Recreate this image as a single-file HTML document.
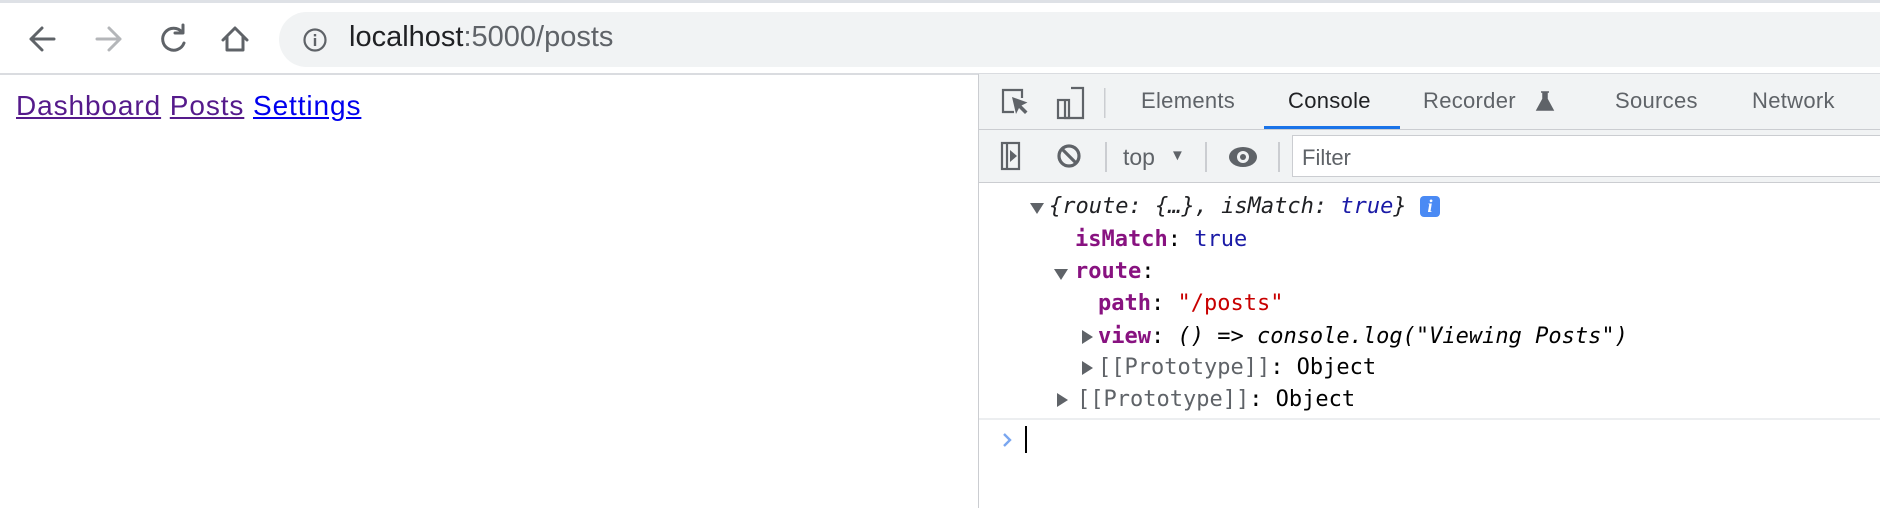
<!DOCTYPE html>
<html><head><style>
body{margin:0;width:1880px;height:508px;background:#fff;position:relative;overflow:hidden;font-family:"Liberation Sans",sans-serif}
.a{position:absolute}
.mono{font-family:"DejaVu Sans Mono",monospace;font-size:22px;white-space:pre;position:absolute;line-height:26px}
.k{color:#881280;font-weight:bold}
.tri{position:absolute;width:0;height:0}
.td{border-left:7px solid transparent;border-right:7px solid transparent;border-top:11px solid #5f6368}
.tr{border-top:7px solid transparent;border-bottom:7px solid transparent;border-left:11px solid #5f6368}
.tab{position:absolute;top:88px;font-size:22px;color:#5f6368;letter-spacing:0.3px}
</style></head><body>
<div class="a" style="left:0;top:0;width:1880px;height:3px;background:#dee1e6"></div>
<div class="a" style="left:0;top:73px;width:1880px;height:2px;background:#dadce0"></div>
<svg class="a" style="left:0;top:0" width="280" height="74">
<g fill="none" stroke="#5f6368" stroke-width="3" stroke-linecap="round" stroke-linejoin="round">
<path d="M54 39H31M42 28l-11 11 11 11"/>
<path d="M97 39h23M109 28l11 11-11 11" stroke="#b4b6b9"/>
<path d="M182 32a11 11 0 1 0 2 11"/><path d="M183 25v8h-8" />
<path d="M247 40l-12-12-12 12M227 37v13h16V37"/>
</g></svg>
<div class="a" style="left:279px;top:12px;width:1700px;height:55px;border-radius:28px;background:#f1f3f4"></div>
<svg class="a" style="left:302px;top:27px" width="26" height="26"><circle cx="13" cy="13" r="10.5" fill="none" stroke="#5f6368" stroke-width="2.2"/><rect x="11.8" y="11" width="2.4" height="8" fill="#5f6368"/><rect x="11.8" y="7" width="2.4" height="2.4" fill="#5f6368"/></svg>
<div class="a" style="left:349px;top:21px;font-size:29px;color:#202124">localhost<span style="color:#5f6368">:5000/posts</span></div>
<div class="a" style="left:16px;top:90px;font-size:28px;letter-spacing:0.9px"><span style="color:#551a8b;text-decoration:underline">Dashboard</span> <span style="color:#551a8b;text-decoration:underline">Posts</span> <span style="color:#0000ee;text-decoration:underline">Settings</span></div>

<div class="a" style="left:978px;top:74px;width:1px;height:434px;background:#cbcdd1"></div>
<div class="a" style="left:979px;top:74px;width:901px;height:56px;background:#f1f3f4;border-bottom:1px solid #cbcdd1;box-sizing:border-box"></div>
<div class="a" style="left:979px;top:130px;width:901px;height:53px;background:#f1f3f4;border-bottom:1px solid #cbcdd1;box-sizing:border-box"></div>
<svg class="a" style="left:1000px;top:84px" width="110" height="40"><g fill="none" stroke="#5f6368" stroke-width="2.2"><path d="M14 28H3V6h19v8"/><path d="M71 4h12v30H65V16"/><rect x="58" y="16" width="11" height="18"/></g><path d="M12 13l4 17 3-6 6 6 2.5-2.5-6-6 6-3z" fill="#5f6368"/><rect x="104" y="4" width="1.5" height="30" fill="#cbcdd1"/></svg>
<div class="tab" style="left:1141px">Elements</div>
<div class="tab" style="left:1288px;color:#202124">Console</div>
<div class="tab" style="left:1423px">Recorder</div>
<svg class="a" style="left:1535px;top:90px" width="20" height="22"><path d="M6 2h8M8 2v7L2 20h16L12 9V2" fill="#5f6368" stroke="#5f6368" stroke-width="1.5"/></svg>
<div class="tab" style="left:1615px">Sources</div>
<div class="tab" style="left:1752px">Network</div>
<div class="a" style="left:1264px;top:126px;width:136px;height:3px;background:#1a73e8"></div>
<svg class="a" style="left:1000px;top:138px" width="100" height="40"><g fill="none" stroke="#5f6368" stroke-width="2.2"><rect x="2" y="5" width="17" height="26"/><path d="M7 5v26"/><circle cx="69" cy="18" r="10" stroke-width="3.2"/><path d="M62 11l14 14" stroke-width="3.2"/></g><path d="M10 12l7 6-7 6z" fill="#5f6368"/></svg>
<div class="a" style="left:1105px;top:142px;width:1.5px;height:30px;background:#cbcdd1"></div>
<div class="a" style="left:1123px;top:144px;font-size:23px;color:#5f6368">top</div>
<div class="a" style="left:1170px;top:147px;font-size:15px;color:#5f6368">▼</div>
<div class="a" style="left:1205px;top:142px;width:1.5px;height:30px;background:#cbcdd1"></div>
<svg class="a" style="left:1227px;top:142px" width="32" height="30"><ellipse cx="16" cy="15" rx="14" ry="10" fill="#5f6368"/><circle cx="16" cy="15" r="6" fill="#f1f3f4"/><circle cx="16" cy="15" r="3" fill="#5f6368"/></svg>
<div class="a" style="left:1278px;top:142px;width:1.5px;height:30px;background:#cbcdd1"></div>
<div class="a" style="left:1292px;top:135px;width:600px;height:42px;background:#fff;border:1px solid #cbcdd1;box-sizing:border-box"></div>
<div class="a" style="left:1302px;top:145px;font-size:22px;color:#5f6368">Filter</div>

<div class="tri td" style="left:1030px;top:203px"></div>
<div class="mono" style="left:1049px;top:194px;font-style:italic;color:#202124">{route: {…}, isMatch: <span style="color:#1a1aa6">true</span>}</div>
<div class="a" style="left:1420px;top:196px;width:20px;height:21px;border-radius:4px;background:#4a8af4;color:#fff;font-size:18px;font-style:italic;font-weight:bold;text-align:center;line-height:21px;font-family:'Liberation Serif',serif">i</div>
<div class="mono" style="left:1075px;top:227px"><span class="k">isMatch</span>: <span style="color:#1a1aa6">true</span></div>
<div class="tri td" style="left:1054px;top:269px"></div>
<div class="mono" style="left:1075px;top:259px"><span class="k">route</span>:</div>
<div class="mono" style="left:1098px;top:291px"><span class="k">path</span>: <span style="color:#c80000">"/posts"</span></div>
<div class="tri tr" style="left:1082px;top:330px"></div>
<div class="mono" style="left:1098px;top:324px"><span class="k">view</span>: <i>() =&gt; console.log("Viewing Posts")</i></div>
<div class="tri tr" style="left:1082px;top:361px"></div>
<div class="mono" style="left:1098px;top:355px"><span style="color:#5f6368">[[Prototype]]</span>: Object</div>
<div class="tri tr" style="left:1057px;top:393px"></div>
<div class="mono" style="left:1077px;top:387px"><span style="color:#5f6368">[[Prototype]]</span>: Object</div>
<div class="a" style="left:979px;top:418px;width:901px;height:2px;background:#eceef0"></div>
<svg class="a" style="left:1000px;top:431px" width="14" height="18"><path d="M4 3l6 6-6 6" fill="none" stroke="#7aa6f0" stroke-width="2.4"/></svg>
<div class="a" style="left:1025px;top:426px;width:2px;height:27px;background:#000"></div>
</body></html>
